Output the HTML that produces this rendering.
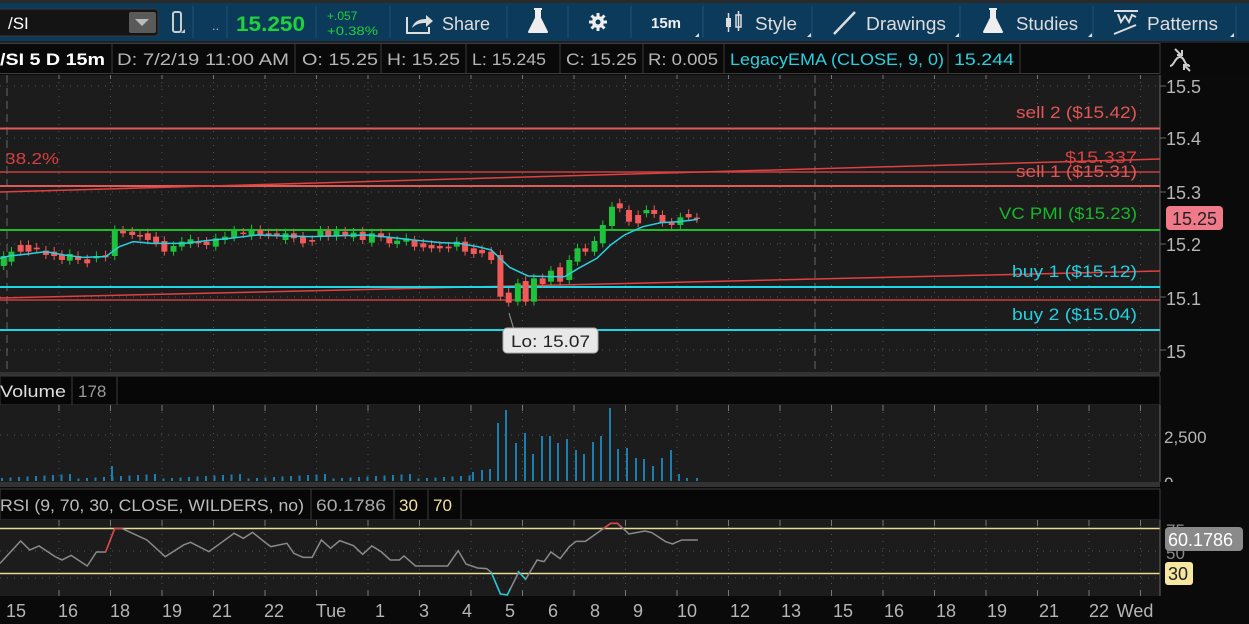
<!DOCTYPE html>
<html><head><meta charset="utf-8">
<style>
html,body{margin:0;padding:0;background:#0a0a0a;width:1249px;height:624px;overflow:hidden}
svg{display:block}
text{font-family:"Liberation Sans",sans-serif}
</style></head><body>
<svg id="s" width="1249" height="624" viewBox="0 0 1249 624" xmlns="http://www.w3.org/2000/svg">
<!-- toolbar -->
<rect x="0" y="0" width="1249" height="43" fill="#0c3a5a"/>
<rect x="0" y="0" width="1249" height="3" fill="#2a2a2a"/>
<rect x="0" y="41" width="1249" height="2" fill="#222"/>
<rect x="-2" y="9" width="160" height="27" rx="3" fill="#141414" stroke="#3a3a3a"/>
<text x="8" y="29" fill="#fff" font-size="17">/SI</text>
<rect x="129" y="12" width="27" height="21" rx="2" fill="#5a5a5a"/>
<path d="M135 19h14l-7 7z" fill="#bbb"/>
<rect x="173" y="12" width="8" height="20" rx="2" fill="none" stroke="#ccc" stroke-width="2"/>
<path d="M185 33l-4 0 4-4z" fill="#ccc"/>
<g stroke="#1e5276" stroke-width="1">
<line x1="193" y1="6" x2="193" y2="38"/><line x1="227" y1="6" x2="227" y2="38"/><line x1="316" y1="6" x2="316" y2="38"/><line x1="390" y1="6" x2="390" y2="38"/><line x1="507" y1="6" x2="507" y2="38"/><line x1="568" y1="6" x2="568" y2="38"/><line x1="631" y1="6" x2="631" y2="38"/><line x1="703" y1="6" x2="703" y2="38"/><line x1="812" y1="6" x2="812" y2="38"/><line x1="960" y1="6" x2="960" y2="38"/><line x1="1093" y1="6" x2="1093" y2="38"/><line x1="1236" y1="6" x2="1236" y2="38"/>
</g>
<text x="212" y="30" fill="#bbb" font-size="13">..</text>
<text x="236" y="31" fill="#1fd13a" font-size="21" font-weight="bold" textLength="69" lengthAdjust="spacingAndGlyphs">15.250</text>
<text x="327" y="20" fill="#1fd13a" font-size="12">+.057</text>
<text x="327" y="35" fill="#1fd13a" font-size="12" textLength="51" lengthAdjust="spacingAndGlyphs">+0.38%</text>
<path d="M407 17v16h22v-6" fill="none" stroke="#ddd" stroke-width="2"/>
<path d="M412 28c2-7 8-9 14-9v-4l7 6-7 6v-4c-6 0-10 1-14 5z" fill="#ddd"/>
<text x="442" y="30" fill="#ddd" font-size="18" textLength="48" lengthAdjust="spacingAndGlyphs">Share</text>
<path d="M534 9h8M536 9v9l-7 14h18l-7-14v-9" fill="#eee" stroke="#eee" stroke-width="2" stroke-linejoin="round"/>
<g transform="translate(598,22)" fill="#eee"><circle r="6"/><g stroke="#eee" stroke-width="3"><line x1="0" y1="-9" x2="0" y2="9"/><line x1="-9" y1="0" x2="9" y2="0"/><line x1="-6.5" y1="-6.5" x2="6.5" y2="6.5"/><line x1="-6.5" y1="6.5" x2="6.5" y2="-6.5"/></g><circle r="2.5" fill="#0c3a5a"/></g>
<text x="651" y="28" fill="#eee" font-size="15" font-weight="bold">15m</text>
<g fill="#ddd"><path d="M695 37h4v-4z"/><path d="M807 37h4v-4z"/><path d="M955 37h4v-4z"/><path d="M1088 37h4v-4z"/><path d="M1230 37h4v-4z"/></g>
<g fill="#ddd"><rect x="726" y="18" width="5" height="9"/><line x1="728.5" y1="13" x2="728.5" y2="32" stroke="#ddd" stroke-width="1.5"/><rect x="736" y="15" width="5" height="12" fill="none" stroke="#ddd" stroke-width="1.5"/><line x1="738.5" y1="11" x2="738.5" y2="31" stroke="#ddd" stroke-width="1.5"/></g>
<text x="755" y="30" fill="#ddd" font-size="18" textLength="42" lengthAdjust="spacingAndGlyphs">Style</text>
<line x1="834" y1="34" x2="855" y2="12" stroke="#ddd" stroke-width="2.5"/>
<text x="866" y="30" fill="#ddd" font-size="18" textLength="80" lengthAdjust="spacingAndGlyphs">Drawings</text>
<path d="M989 9h8M991 9v9l-7 14h18l-7-14v-9" fill="#eee" stroke="#eee" stroke-width="2" stroke-linejoin="round"/>
<text x="1016" y="30" fill="#ddd" font-size="18" textLength="62" lengthAdjust="spacingAndGlyphs">Studies</text>
<path d="M1114 11h24M1118 14l3 8 4-6 4 6 3-7 4 2M1114 34l22-9" fill="none" stroke="#ddd" stroke-width="2"/>
<text x="1147" y="30" fill="#ddd" font-size="18" textLength="71" lengthAdjust="spacingAndGlyphs">Patterns</text>
<!-- info row -->
<rect x="0" y="43" width="1249" height="31" fill="#090909"/>
<g fill="none" stroke="#3c3c3c"><rect x="-1" y="43.5" width="1161" height="30"/></g>
<g stroke="#3c3c3c"><line x1="112" y1="43" x2="112" y2="74"/><line x1="295" y1="43" x2="295" y2="74"/><line x1="381" y1="43" x2="381" y2="74"/><line x1="466" y1="43" x2="466" y2="74"/><line x1="560" y1="43" x2="560" y2="74"/><line x1="643" y1="43" x2="643" y2="74"/><line x1="724" y1="43" x2="724" y2="74"/><line x1="948" y1="43" x2="948" y2="74"/><line x1="1020" y1="43" x2="1020" y2="74"/></g>
<text x="0" y="65" fill="#fff" font-size="17" font-weight="bold" textLength="105" lengthAdjust="spacingAndGlyphs">/SI 5 D 15m</text>
<g fill="#b5b5b5" font-size="17">
<text x="117" y="65" textLength="172" lengthAdjust="spacingAndGlyphs">D: 7/2/19 11:00 AM</text><text x="302" y="65" textLength="76" lengthAdjust="spacingAndGlyphs">O: 15.25</text><text x="387" y="65" textLength="73" lengthAdjust="spacingAndGlyphs">H: 15.25</text><text x="472" y="65" textLength="74" lengthAdjust="spacingAndGlyphs">L: 15.245</text><text x="566" y="65" textLength="71" lengthAdjust="spacingAndGlyphs">C: 15.25</text><text x="648" y="65" textLength="70" lengthAdjust="spacingAndGlyphs">R: 0.005</text></g>
<text x="730" y="65" fill="#2ad0e0" font-size="17" textLength="214" lengthAdjust="spacingAndGlyphs">LegacyEMA (CLOSE, 9, 0)</text>
<text x="954" y="65" fill="#2ad0e0" font-size="17" textLength="60" lengthAdjust="spacingAndGlyphs">15.244</text>
<path d="M1175 49l7 7M1177 55h5v-5" fill="none" stroke="#ccc" stroke-width="2"/>
<path d="M1170 66c4 0 5-9 10-9s4 9 10 9" fill="none" stroke="#ccc" stroke-width="2"/>
<path d="M1190 71l-6-6M1184 70v-5h5" fill="none" stroke="#ccc" stroke-width="2"/>
<!-- main plot -->
<rect x="0" y="75" width="1160" height="297" fill="#1c1c1c"/>
<rect x="1160" y="75" width="89" height="549" fill="#0a0a0a"/>
<g id="vg" stroke="#555" stroke-width="1" stroke-dasharray="1 6"></g>
<g stroke="#555" stroke-dasharray="1 6">
<line x1="0" y1="86" x2="1160" y2="86"/><line x1="0" y1="138" x2="1160" y2="138"/><line x1="0" y1="192" x2="1160" y2="192"/><line x1="0" y1="244" x2="1160" y2="244"/><line x1="0" y1="297" x2="1160" y2="297"/><line x1="0" y1="350" x2="1160" y2="350"/></g>
<line x1="7" y1="75" x2="7" y2="372" stroke="#666" stroke-dasharray="8 5"/>
<line x1="815" y1="75" x2="815" y2="372" stroke="#666" stroke-dasharray="8 5"/>
<g stroke="#666"><line x1="1160" y1="75" x2="1160" y2="372"/></g>
<!-- levels -->
<line x1="0" y1="128.5" x2="1160" y2="128.5" stroke="#e05a5a" stroke-width="2"/>
<line x1="0" y1="172" x2="1160" y2="172" stroke="#c84040" stroke-width="1.5"/>
<line x1="0" y1="186" x2="1160" y2="186" stroke="#e05a5a" stroke-width="2"/>
<line x1="0" y1="192" x2="1160" y2="159" stroke="#e04040" stroke-width="1.5"/>
<line x1="0" y1="230" x2="1160" y2="230" stroke="#19c02a" stroke-width="2"/>
<line x1="0" y1="298" x2="1160" y2="271" stroke="#e04040" stroke-width="1.5"/>
<line x1="0" y1="287" x2="1160" y2="287" stroke="#1fd6e6" stroke-width="2"/>
<line x1="0" y1="300" x2="1160" y2="300" stroke="#c84040" stroke-width="1.5"/>
<line x1="0" y1="330" x2="1160" y2="330" stroke="#1fd6e6" stroke-width="2"/>
<g font-size="17">
<text x="1016" y="118" fill="#e05555" textLength="121" lengthAdjust="spacingAndGlyphs">sell 2 ($15.42)</text>
<text x="1065" y="163" fill="#d84040" textLength="72" lengthAdjust="spacingAndGlyphs">$15.337</text>
<text x="1016" y="177" fill="#e05555" textLength="121" lengthAdjust="spacingAndGlyphs">sell 1 ($15.31)</text>
<text x="999" y="219" fill="#16b82a" textLength="138" lengthAdjust="spacingAndGlyphs">VC PMI ($15.23)</text>
<text x="1012" y="277" fill="#22cfe0" textLength="125" lengthAdjust="spacingAndGlyphs">buy 1 ($15.12)</text>
<text x="1012" y="320" fill="#22cfe0" textLength="125" lengthAdjust="spacingAndGlyphs">buy 2 ($15.04)</text>
</g>
<text x="5" y="164" fill="#d84040" font-size="16" textLength="54" lengthAdjust="spacingAndGlyphs">38.2%</text>
<g id="cd" transform="translate(0,180) scale(0.4591,0.3333)"></g>
<polyline transform="translate(0,180) scale(0.4591,0.3333)" vector-effect="non-scaling-stroke" fill="none" stroke="#2ad0e0" stroke-width="1.5" points="0,235 20,228 60,222 100,215 140,225 180,232 230,230 260,200 290,185 330,190 400,190 450,182 500,175 560,165 620,168 680,170 720,168 800,165 850,172 900,180 960,188 1000,190 1040,200 1070,210 1110,262 1150,288 1200,290 1230,290 1260,265 1300,235 1330,195 1360,165 1400,140 1440,128 1480,125 1520,118"/>
<path d="M509 313l6 20" stroke="#999" stroke-width="1"/>
<rect x="503" y="328" width="95" height="25" rx="4" fill="#e8e8e8" stroke="#aaa"/>
<text x="511" y="347" fill="#222" font-size="17" textLength="79" lengthAdjust="spacingAndGlyphs">Lo: 15.07</text>
<g fill="#b5b5b5" font-size="18"><text x="1166" y="93">15.5</text><text x="1166" y="145">15.4</text><text x="1166" y="199">15.3</text><text x="1166" y="251">15.2</text><text x="1166" y="305">15.1</text><text x="1166" y="358">15</text></g>
<g stroke="#666"><line x1="1160" y1="86" x2="1166" y2="86"/><line x1="1160" y1="138" x2="1166" y2="138"/><line x1="1160" y1="192" x2="1166" y2="192"/><line x1="1160" y1="244" x2="1166" y2="244"/><line x1="1160" y1="297" x2="1166" y2="297"/><line x1="1160" y1="350" x2="1166" y2="350"/></g>
<rect x="1166" y="206" width="57" height="24" rx="4" fill="#f07a8a"/>
<text x="1172" y="225" fill="#222" font-size="18">15.25</text>
<!-- volume -->
<rect x="0" y="372" width="1160" height="4" fill="#333"/>
<rect x="0" y="376" width="1160" height="29" fill="#070707" stroke="#3c3c3c"/>
<line x1="72" y1="376" x2="72" y2="405" stroke="#3c3c3c"/><line x1="117" y1="376" x2="117" y2="405" stroke="#3c3c3c"/>
<text x="0" y="397" fill="#ddd" font-size="17" textLength="66" lengthAdjust="spacingAndGlyphs">Volume</text>
<text x="78" y="397" fill="#999" font-size="17">178</text>
<rect x="0" y="405" width="1160" height="77" fill="#1c1c1c"/>
<line x1="0" y1="435" x2="1160" y2="435" stroke="#555" stroke-dasharray="1 6"/>
<g id="vg2" stroke="#555" stroke-dasharray="1 6"></g>
<g id="vol" stroke="#1a7fb0" stroke-width="2"></g>
<line x1="1160" y1="405" x2="1160" y2="482" stroke="#666"/>
<text x="1164" y="443" fill="#b5b5b5" font-size="17">2,500</text>
<text x="1164" y="489" fill="#b5b5b5" font-size="17">0</text>
<!-- RSI -->
<rect x="0" y="482" width="1160" height="5" fill="#333"/>
<rect x="1160" y="482" width="89" height="7" fill="#0a0a0a"/>
<rect x="0" y="489" width="1160" height="31" fill="#070707" stroke="#3c3c3c"/>
<line x1="311" y1="489" x2="311" y2="520" stroke="#3c3c3c"/><line x1="394" y1="489" x2="394" y2="520" stroke="#3c3c3c"/><line x1="428" y1="489" x2="428" y2="520" stroke="#3c3c3c"/><line x1="461" y1="489" x2="461" y2="520" stroke="#3c3c3c"/>
<text x="0" y="511" fill="#bbb" font-size="17" textLength="304" lengthAdjust="spacingAndGlyphs">RSI (9, 70, 30, CLOSE, WILDERS, no)</text>
<text x="316" y="511" fill="#aaa" font-size="17" textLength="70" lengthAdjust="spacingAndGlyphs">60.1786</text>
<text x="399" y="511" fill="#f0e3a0" font-size="17">30</text>
<text x="433" y="511" fill="#f0e3a0" font-size="17">70</text>
<rect x="0" y="520" width="1160" height="76" fill="#1c1c1c"/>
<line x1="0" y1="551" x2="1160" y2="551" stroke="#555" stroke-dasharray="1 6"/>
<line x1="0" y1="578" x2="1160" y2="578" stroke="#555" stroke-dasharray="1 6"/>
<g id="vg3" stroke="#555" stroke-dasharray="1 6"></g>
<line x1="0" y1="528.5" x2="1160" y2="528.5" stroke="#e8dc90" stroke-width="1.5"/>
<line x1="0" y1="573.5" x2="1160" y2="573.5" stroke="#e8dc90" stroke-width="1.5"/>
<line x1="1160" y1="520" x2="1160" y2="596" stroke="#666"/>
<polyline transform="translate(0,370) scale(0.4591,0.3333)" vector-effect="non-scaling-stroke" fill="none" stroke="#8a8a8a" stroke-width="1.5" points="0,580 45,513 65,540 85,528 120,560 135,570 155,556 190,588 210,546 230,546 250,475 265,475 320,510 360,560 400,525 415,517 455,545 480,520 510,490 530,505 550,487 580,520 590,530 625,520 640,550 660,562 680,562 700,510 720,535 740,512 770,527 790,553 810,528 830,545 850,570 870,570 880,558 905,588 975,588 998,542 1015,582 1040,594 1060,596 1070,607 1090,672 1105,675 1130,606 1145,628 1170,570 1185,575 1200,546 1220,566 1240,530 1255,514 1275,514 1310,480 1330,460 1345,460 1370,492 1405,483 1420,488 1450,515 1465,522 1485,510 1520,510"/>
<polyline transform="translate(0,370) scale(0.4591,0.3333)" vector-effect="non-scaling-stroke" fill="none" stroke="#e04545" stroke-width="1.5" points="230,546 250,475 265,475"/>
<polyline transform="translate(0,370) scale(0.4591,0.3333)" vector-effect="non-scaling-stroke" fill="none" stroke="#e04545" stroke-width="1.5" points="1315,476 1330,460 1345,460 1352,470"/>
<polyline transform="translate(0,370) scale(0.4591,0.3333)" vector-effect="non-scaling-stroke" fill="none" stroke="#22c8d8" stroke-width="1.5" points="1070,607 1090,672 1105,675 1112,655"/>
<polyline transform="translate(0,370) scale(0.4591,0.3333)" vector-effect="non-scaling-stroke" fill="none" stroke="#22c8d8" stroke-width="1.5" points="1128,603 1145,628"/>
<g fill="#888" font-size="17"><text x="1166" y="536">75</text><text x="1166" y="559">50</text></g>
<rect x="1165" y="527" width="78" height="24" rx="4" fill="#8a8a8a"/>
<text x="1168" y="546" fill="#fff" font-size="18">60.1786</text>
<rect x="1165" y="562" width="28" height="23" rx="3" fill="#f5e7a0"/>
<text x="1168" y="580" fill="#222" font-size="18">30</text>
<!-- time axis -->
<rect x="0" y="596" width="1160" height="28" fill="#0a0a0a"/>
<g fill="#b5b5b5" font-size="18" text-anchor="middle">
<text x="16" y="617">15</text><text x="68" y="617">16</text><text x="120" y="617">18</text><text x="172" y="617">19</text><text x="222" y="617">21</text><text x="274" y="617">22</text><text x="331" y="617">Tue</text><text x="380" y="617">1</text><text x="424" y="617">3</text><text x="467" y="617">4</text><text x="510" y="617">5</text><text x="553" y="617">6</text><text x="595" y="617">8</text><text x="638" y="617">9</text><text x="687" y="617">10</text><text x="740" y="617">12</text><text x="791" y="617">13</text><text x="843" y="617">15</text><text x="894" y="617">16</text><text x="946" y="617">18</text><text x="997" y="617">19</text><text x="1049" y="617">21</text><text x="1099" y="617">22</text><text x="1135" y="617">Wed</text></g>
</svg>
<script>
var NS="http://www.w3.org/2000/svg";
function el(p,t,a){var e=document.createElementNS(NS,t);for(var k in a)e.setAttribute(k,a[k]);p.appendChild(e);return e;}
var gx=[];for(var k=0;k<22;k++)gx.push(59+k*51.5);
[["vg",75,372],["vg2",405,482],["vg3",520,596]].forEach(function(g){var p=document.getElementById(g[0]);gx.forEach(function(x){el(p,"line",{x1:x,y1:g[1],x2:x,y2:g[2]});});});
gx.forEach(function(x){[[75,79],[405,411],[520,526],[590,596]].forEach(function(r){el(document.getElementById("s"),"line",{x1:x,y1:r[0],x2:x,y2:r[1],stroke:"#777"});});});
var C=[[8,228,258,1],[25,215,245,1],[45,195,215,0],[62,195,215,0],[80,203,208,0],[100,212,225,0],[118,215,228,0],[135,225,240,0],[152,222,242,1],[170,228,240,0],[190,238,250,0],[210,228,235,1],[230,226,232,0],[250,150,228,1],[268,152,160,0],[288,155,165,0],[305,165,170,0],[322,160,180,0],[340,170,188,0],[358,183,215,0],[378,198,215,1],[396,185,200,1],[415,178,192,1],[432,185,190,0],[450,185,195,0],[470,175,200,1],[490,170,180,1],[510,152,172,1],[530,158,162,0],[548,148,168,1],[567,150,165,0],[585,160,165,0],[603,160,165,0],[622,160,180,1],[640,160,175,0],[660,170,190,0],[680,180,185,0],[698,152,170,1],[715,152,170,0],[733,152,170,1],[752,155,165,0],[770,158,172,1],[790,155,180,0],[810,160,188,1],[830,160,172,0],[848,172,190,0],[865,182,192,1],[885,175,185,1],[903,182,200,0],[922,190,202,0],[940,195,205,0],[958,198,205,0],[977,200,205,0],[995,185,200,1],[1013,185,215,0],[1032,205,222,0],[1050,210,220,0],[1070,215,240,0],[1090,225,350,0],[1108,338,368,0],[1128,310,365,1],[1145,303,365,0],[1163,295,365,1],[1182,295,312,0],[1200,272,305,1],[1220,262,305,0],[1240,240,300,1],[1258,205,245,1],[1275,205,215,0],[1295,183,215,1],[1313,135,190,1],[1333,80,138,1],[1350,70,85,0],[1370,90,125,0],[1390,105,130,0],[1408,90,100,1],[1425,90,102,0],[1443,105,128,0],[1463,128,135,0],[1482,112,135,1],[1500,102,112,0],[1518,113,117,0]];
var cd=document.getElementById("cd");
C.forEach(function(c){var col=c[3]?"#1ec23c":"#f25a5a";var h=Math.max(4,c[2]-c[1]);
el(cd,"line",{x1:c[0],y1:c[1]-14,x2:c[0],y2:c[1]+h+12,stroke:col,"stroke-width":1,"vector-effect":"non-scaling-stroke"});
el(cd,"rect",{x:c[0]-6.5,y:c[1],width:13,height:h,fill:col});});
var vol=document.getElementById("vol");
var V={112:466,473:472,482:470,490:469,498:423,506:410,516:443,525:433,533:454,542:436,550:436,558:443,567:439,576:450,584:454,593:442,601:436,610:408,618:449,627:448,636:458,644:459,653:466,662:458,671:450,679:474,687:478,697:478};
for(var x=2;x<470;x+=8.5){var t=474+((x*7)%5);el(vol,"line",{x1:x.toFixed(1),y1:t,x2:x.toFixed(1),y2:481});}
for(var k in V){el(vol,"line",{x1:k,y1:V[k],x2:k,y2:481});}
</script>
</body></html>
